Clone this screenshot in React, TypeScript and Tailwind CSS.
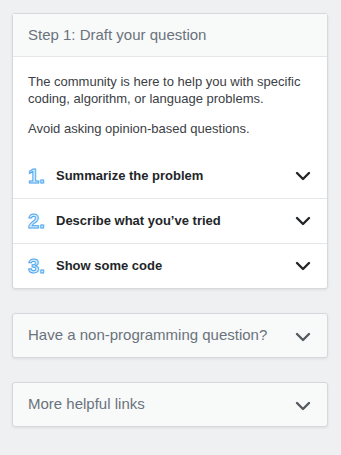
import React from "react";

function Chevron({ className }: { className?: string }) {
  return (
    <svg width="16" height="10" viewBox="0 0 16 10" fill="none" className={className}>
      <path d="M2 2l6 6 6-6" stroke="currentColor" strokeWidth="2.4" strokeLinecap="round" strokeLinejoin="round" />
    </svg>
  );
}

const steps = ["Summarize the problem", "Describe what you’ve tried", "Show some code"];

export default function App() {
  return (
    <div
      className="min-h-[455px] w-[341px] bg-[#eff0f1] pt-[13px] pl-[12px] pr-[13px]"
      style={{ fontFamily: '"Liberation Sans", Arial, sans-serif' }}
    >
      <div className="w-[316px] rounded-[3px] border border-[#d6d9dc] bg-white shadow-[0_1px_3px_rgba(0,0,0,0.08)]">
        <div className="flex h-[43px] items-center border-b border-[#e4e6e8] bg-[#f8f9f9] px-[15px] text-[15px] text-[#6a737c]">
          Step 1: Draft your question
        </div>
        <div className="px-[15px] pt-[16px] text-[13px] leading-[17px] text-[#3b4045]">
          <p>The community is here to help you with specific coding, algorithm, or language problems.</p>
          <p className="mt-[13px]">Avoid asking opinion-based questions.</p>
        </div>
        <ul className="mt-[16px]">
          {steps.map((s, i) => (
            <li
              key={s}
              className={`flex h-[45px] items-center px-[15px] ${i > 0 ? "border-t border-[#e4e6e8]" : ""}`}
            >
              <span className="w-[28px] text-[20px] font-bold leading-none text-[#dcefff] [-webkit-text-stroke:1px_#4aa8f0]">
                {i + 1}.
              </span>
              <span className="flex-1 text-[13px] font-bold text-[#232629]">{s}</span>
              <Chevron className="mr-[1px] text-[#232629]" />
            </li>
          ))}
        </ul>
      </div>

      {["Have a non-programming question?", "More helpful links"].map((t) => (
        <div
          key={t}
          className="mt-[24px] flex h-[45px] w-[316px] items-center rounded-[3px] border border-[#d6d9dc] bg-[#f8f9f9] px-[15px] shadow-[0_1px_3px_rgba(0,0,0,0.08)]"
        >
          <span className="flex-1 text-[15px] text-[#6a737c]">{t}</span>
          <Chevron className="mr-[1px] mt-[2px] text-[#535a60]" />
        </div>
      ))}
    </div>
  );
}
